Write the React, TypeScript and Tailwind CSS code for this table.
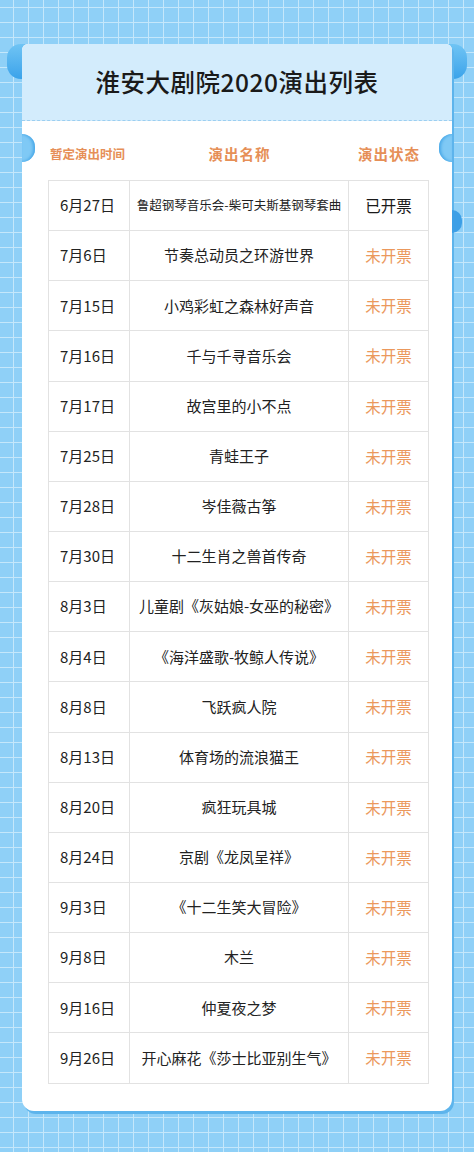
const shows: [string, string, boolean][] = [
  ["6月27日", "鲁超钢琴音乐会-柴可夫斯基钢琴套曲", true],
  ["7月6日", "节奏总动员之环游世界", false],
  ["7月15日", "小鸡彩虹之森林好声音", false],
  ["7月16日", "千与千寻音乐会", false],
  ["7月17日", "故宫里的小不点", false],
  ["7月25日", "青蛙王子", false],
  ["7月28日", "岑佳薇古筝", false],
  ["7月30日", "十二生肖之兽首传奇", false],
  ["8月3日", "儿童剧《灰姑娘-女巫的秘密》", false],
  ["8月4日", "《海洋盛歌-牧鲸人传说》", false],
  ["8月8日", "飞跃疯人院", false],
  ["8月13日", "体育场的流浪猫王", false],
  ["8月20日", "疯狂玩具城", false],
  ["8月24日", "京剧《龙凤呈祥》", false],
  ["9月3日", "《十二生笑大冒险》", false],
  ["9月8日", "木兰", false],
  ["9月16日", "仲夏夜之梦", false],
  ["9月26日", "开心麻花《莎士比亚别生气》", false],
];

export default function App() {
  return (
    <div className="w-[474px] h-[1152px] overflow-hidden bg-[#8fd0f7] bg-[linear-gradient(to_right,#c4e7fb_1px,transparent_1px),linear-gradient(to_bottom,#c4e7fb_1px,transparent_1px)] bg-[size:15px_15px] bg-[position:13px_7px] pt-[38px] px-[7px] font-['Noto_Sans_CJK_SC',sans-serif]">
      <div className="relative">
        {/* top roll */}
        <div className="absolute left-0 right-0 top-0 h-[35px] rounded-[14px] bg-gradient-to-b from-[#6fc4f4] to-[#3aa3ea]" />

        <div className="relative mx-[15px] mt-[6px] rounded-t-[6px] rounded-b-[12px] bg-white shadow-[2px_3px_0_#5db4ec]">
          <div className="h-[77px] flex items-center justify-center rounded-t-[6px] bg-[#d3ecfc] border-b border-dashed border-[#9ccff1]">
            <h1 className="text-[24.5px] font-medium tracking-[0.5px] text-[#1a1a1a]">淮安大剧院2020演出列表</h1>
          </div>

          {/* notches */}
          <div className="absolute left-0 top-[90px] w-[13px] h-[28px] rounded-r-full bg-[#7fc9f5] shadow-[inset_-2px_0_3px_#4aa9e8]" />
          <div className="absolute right-0 top-[90px] w-[13px] h-[28px] rounded-l-full bg-[#7fc9f5] shadow-[inset_2px_0_3px_#4aa9e8]" />
          <div className="absolute right-[-10px] top-[166px] w-[10px] h-[23px] rounded-r-full bg-[#3d9fe6]" />

          <div className="pt-[21px] pb-[27px] pl-[26px] pr-[23px]">
            <div className="h-[24px] mb-[14px] flex items-center font-bold text-[#e68f57]">
              <div className="w-[82px] pl-[2px] text-[12.5px]">暂定演出时间</div>
              <div className="w-[219px] text-center text-[14.5px] tracking-[1px]">演出名称</div>
              <div className="flex-1 text-center text-[14.5px] tracking-[1px]">演出状态</div>
            </div>

            <div className="border-t border-l border-r border-[#e2e2e2]">
              {shows.map(([date, name, open]) => (
                <div key={date} className="h-[50.15px] flex border-b border-[#e2e2e2] text-[#222]">
                  <div className="w-[81px] border-r border-[#e2e2e2] pl-[11px] flex items-center text-[15px]">{date}</div>
                  <div className={`w-[219px] border-r border-[#e2e2e2] flex items-center justify-center ${open ? "text-[12.5px]" : "text-[15px]"}`}>{name}</div>
                  <div className={`flex-1 flex items-center justify-center text-[15.5px] ${open ? "text-[#1a1a1a]" : "text-[#eb985c]"}`}>
                    {open ? "已开票" : "未开票"}
                  </div>
                </div>
              ))}
            </div>
          </div>
        </div>
      </div>
    </div>
  );
}
